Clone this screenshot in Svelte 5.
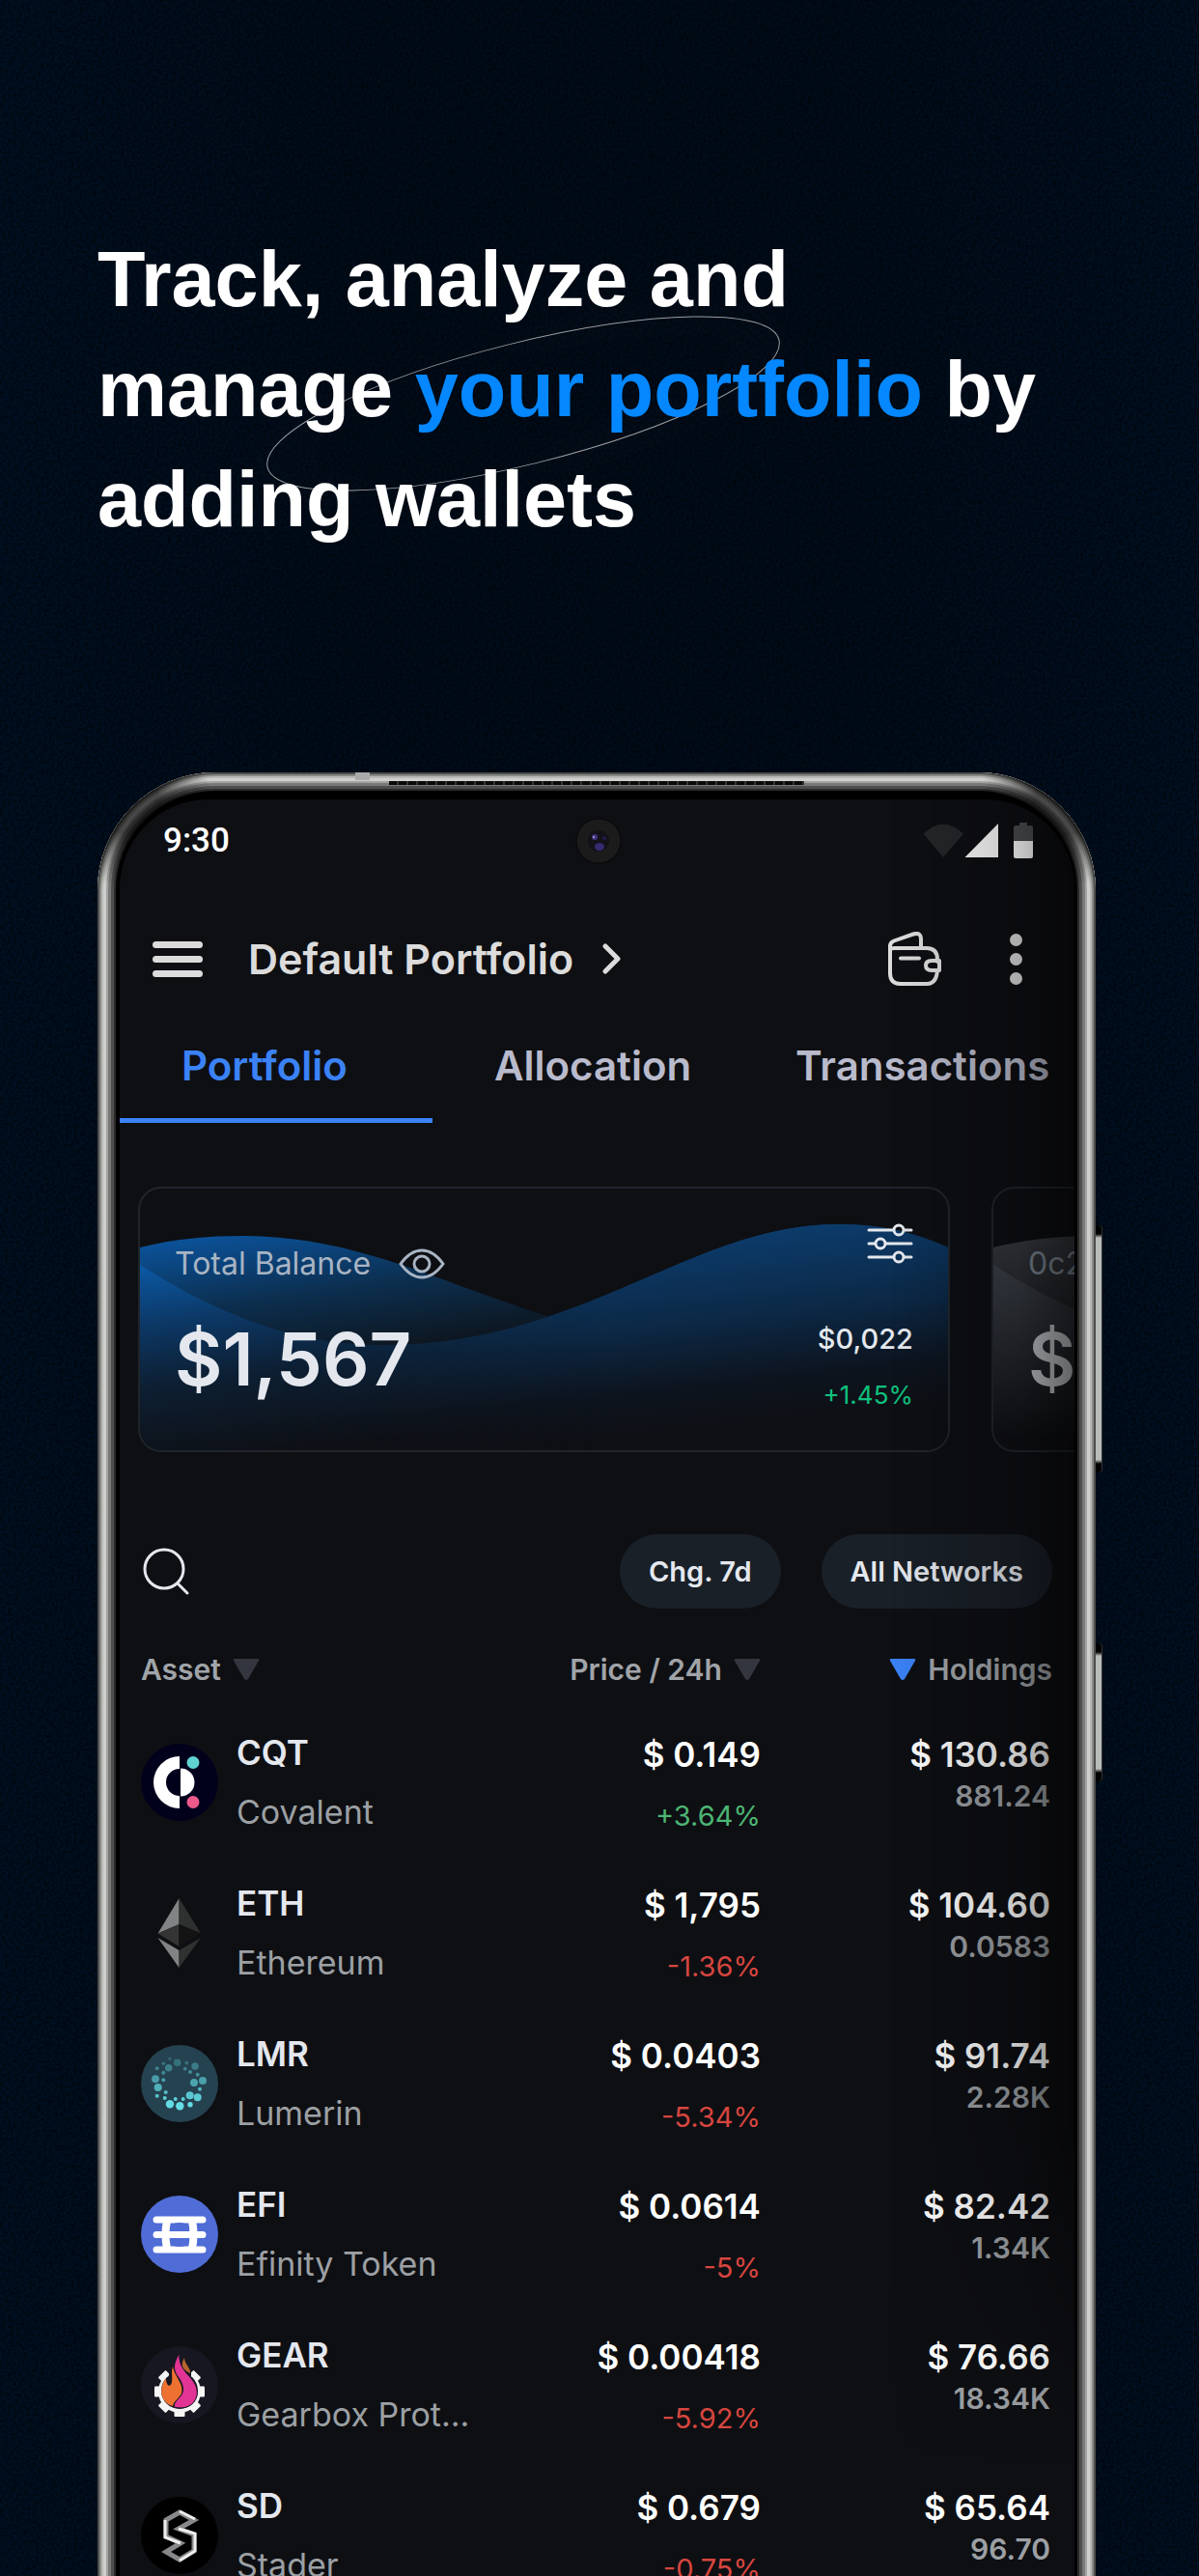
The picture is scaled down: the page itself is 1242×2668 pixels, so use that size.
<script lang="ts">
	type Asset = {
		symbol: string;
		name: string;
		price: string;
		change: string;
		value: string;
		amount: string;
	};

	const assets: Asset[] = [
		{ symbol: 'CQT', name: 'Covalent', price: '$ 0.149', change: '+3.64%', value: '$ 130.86', amount: '881.24' },
		{ symbol: 'ETH', name: 'Ethereum', price: '$ 1,795', change: '-1.36%', value: '$ 104.60', amount: '0.0583' },
		{ symbol: 'LMR', name: 'Lumerin', price: '$ 0.0403', change: '-5.34%', value: '$ 91.74', amount: '2.28K' },
		{ symbol: 'EFI', name: 'Efinity Token', price: '$ 0.0614', change: '-5%', value: '$ 82.42', amount: '1.34K' },
		{ symbol: 'GEAR', name: 'Gearbox Prot...', price: '$ 0.00418', change: '-5.92%', value: '$ 76.66', amount: '18.34K' },
		{ symbol: 'SD', name: 'Stader', price: '$ 0.679', change: '-0.75%', value: '$ 65.64', amount: '96.70' }
	];

	const tabs = ['Portfolio', 'Allocation', 'Transactions'];
	let activeTab = $state('Portfolio');

	// x, y, radius
	const lumerinDots = [
		[37.7, 18.3, 3.8], [28.7, 23.7, 3.8], [56, 22, 3.8], [64, 37, 4], [55, 39, 4],
		[50.7, 52.3, 4], [58.7, 54.3, 4], [40.3, 63.3, 4.2], [30, 61.3, 4.2], [17.7, 44, 4],
		[15, 35.3, 4], [30, 14.3, 1.7], [23.3, 19.3, 1.8], [16.7, 24.3, 2], [23.3, 28.7, 2],
		[23.3, 36.3, 2], [47.3, 18.7, 1.9], [45.7, 24.7, 1.9], [51, 28, 2], [58.7, 30.7, 2],
		[61, 45.7, 2], [25.7, 49, 2], [24.7, 55, 2], [16.7, 52.7, 2], [35.7, 56, 2],
		[43.7, 56, 2], [51, 61.7, 2.7]
	];

	const gearTeeth = [0, 45, 90, 135, 180, 225, 270, 315];
</script>

<main>
	<svg class="grain" aria-hidden="true">
		<filter id="noise">
			<feTurbulence type="fractalNoise" baseFrequency="0.35" numOctaves="2" />
			<feColorMatrix values="0 0 0 0 0  0 0 0 0 0  0 0 0 0 0  0 0 0 1.4 -0.5" />
		</filter>
		<rect width="100%" height="100%" filter="url(#noise)" />
	</svg>

	<h1>
		<svg class="orbit" viewBox="0 0 560 200" aria-hidden="true">
			<ellipse cx="280" cy="100" rx="273" ry="63" transform="rotate(-14 280 100)" />
		</svg>
		<span>Track, analyze and manage <em>your portfolio</em> by adding wallets</span>
	</h1>

	<div class="phone">
		<i class="antenna"></i>
		<i class="speaker"></i>
		<i class="side-button volume"></i>
		<i class="side-button power"></i>
		<div class="screen">
			<div class="status">
				<span>9:30</span>
				<svg class="camera" viewBox="0 0 48 48" aria-hidden="true">
					<circle cx="24" cy="24" r="23" fill="#1b1b1c" stroke="#08080a" stroke-width="1" />
					<circle cx="24" cy="24" r="11" fill="#131218" />
					<circle cx="20" cy="20" r="3" fill="#443480" />
					<circle cx="19" cy="20" r="1" fill="#a99be0" />
					<ellipse cx="25" cy="30" rx="5" ry="4" fill="#352a74" />
					<circle cx="30" cy="21" r="2" fill="#231c4c" />
				</svg>
				<svg class="signals" viewBox="0 0 114 40" aria-hidden="true">
					<path d="M0.500 12.500Q21 -7 42 12.500L21 37Z" fill="#26272a" />
					<path d="M43.500 37H78V2Z" fill="#fff" />
					<path d="M100 1h8v3h4q2 0 2 2v15H94V6q0-2 2-2h4z" fill="#4c4d4f" />
					<path d="M94 20h20v16q0 2-2 2H96q-2 0-2-2z" fill="#fff" />
				</svg>
			</div>

			<header>
				<button class="menu" aria-label="Menu"><i></i><i></i><i></i></button>
				<button class="picker">
					Default Portfolio
					<svg width="20" height="34" viewBox="0 0 20 34" aria-hidden="true">
						<path d="M3 4L16 17L3 30" />
					</svg>
				</button>
				<button class="wallets" aria-label="Wallets">
					<svg width="56" height="56" viewBox="0 0 56 56" aria-hidden="true">
						<path d="M3 19Q3 17 8 17H41Q52 17 52 29V31M52 40Q51 54 41 54H14Q3 54 3 43V15Q3 11 7 9.500L27 2.500Q35 0 35 8V16" />
						<path d="M14 27.500H33" />
						<path d="M46 30H54V40H46Q40 40 40 35Q40 30 46 30Z" />
					</svg>
				</button>
				<button class="more" aria-label="More"><i></i><i></i><i></i></button>
			</header>

			<nav>
				{#each tabs as tab}
					<button class:active={tab === activeTab} onclick={() => (activeTab = tab)}>{tab}</button>
				{/each}
			</nav>

			<section class="cards">
				<article class="card">
					<svg class="waves" viewBox="0 0 838 271" preserveAspectRatio="none" aria-hidden="true">
						<defs>
							<linearGradient id="back" gradientUnits="userSpaceOnUse" x1="150" y1="40" x2="170" y2="180">
								<stop offset="0" stop-color="#0b5096" />
								<stop offset="0.5" stop-color="#0c2f50" />
								<stop offset="1" stop-color="#0d161f" />
							</linearGradient>
							<linearGradient id="backFade" x1="0" x2="1" y1="0" y2="0">
								<stop offset="0.5" stop-color="#fff" />
								<stop offset="0.8" stop-color="#000" />
							</linearGradient>
							<mask id="backMask"><rect width="838" height="271" fill="url(#backFade)" /></mask>
							<linearGradient id="front" gradientUnits="userSpaceOnUse" x1="0" y1="60" x2="30" y2="290">
								<stop offset="0" stop-color="#0b63b8" />
								<stop offset="0.35" stop-color="#0c3866" />
								<stop offset="0.62" stop-color="#0d1f33" />
								<stop offset="1" stop-color="#0e0f14" />
							</linearGradient>
							<linearGradient id="frontRight" gradientUnits="userSpaceOnUse" x1="600" y1="20" x2="625" y2="250">
								<stop offset="0" stop-color="#0c4177" />
								<stop offset="0.5" stop-color="#0c2845" />
								<stop offset="0.78" stop-color="#0d141f" />
								<stop offset="1" stop-color="#0e0f13" />
							</linearGradient>
							<linearGradient id="shift" gradientUnits="userSpaceOnUse" x1="150" y1="0" x2="480" y2="0">
								<stop offset="0" stop-color="#000" />
								<stop offset="1" stop-color="#fff" />
							</linearGradient>
							<mask id="shiftMask"><rect width="838" height="271" fill="url(#shift)" /></mask>
						</defs>
						<path d="M0 61C36 52 70 49 106 49C240 49 330 110 480 149C540 161 600 165 660 163V271H0Z" fill="url(#back)" mask="url(#backMask)" />
						<path d="M0 79C80 130 160 162 252 162C460 162 570 37 725 37C770 37 805 46 838 61V271H0Z" fill="url(#front)" />
						<path d="M0 79C80 130 160 162 252 162C460 162 570 37 725 37C770 37 805 46 838 61V271H0Z" fill="url(#frontRight)" mask="url(#shiftMask)" />
					</svg>
					<div class="balance">
						<p class="label">
							Total Balance
							<button aria-label="Hide balance">
								<svg width="48" height="32" viewBox="0 0 48 32" aria-hidden="true">
									<path d="M2 16Q12 2 24 2T46 16Q36 30 24 30T2 16Z" />
									<circle cx="24" cy="16" r="8" />
								</svg>
							</button>
						</p>
						<strong>$1,567</strong>
					</div>
					<div class="side">
						<button aria-label="Settings">
							<svg width="48" height="42" viewBox="0 0 48 42" aria-hidden="true">
								<path d="M2 7H27M39 7H46M2 21H8M20 21H46M2 35H27M39 35H46" />
								<circle cx="33" cy="7" r="5" />
								<circle cx="14" cy="21" r="5" />
								<circle cx="33" cy="35" r="5" />
							</svg>
						</button>
						<span>$0,022</span>
						<span class="gain">+1.45%</span>
					</div>
				</article>
				<article class="card muted">
					<svg class="waves" viewBox="0 0 838 271" preserveAspectRatio="none" aria-hidden="true">
						<defs>
							<linearGradient id="grey" gradientUnits="userSpaceOnUse" x1="0" x2="10" y1="70" y2="260">
								<stop offset="0" stop-color="#3e434a" />
								<stop offset="1" stop-color="#0e0f13" />
							</linearGradient>
							<linearGradient id="greyBack" gradientUnits="userSpaceOnUse" x1="0" x2="0" y1="40" y2="160">
								<stop offset="0" stop-color="#3a3d43" />
								<stop offset="1" stop-color="#17191d" />
							</linearGradient>
						</defs>
						<path d="M0 61C36 52 70 49 106 49C240 49 330 120 480 149V271H0Z" fill="url(#greyBack)" />
						<path d="M0 79C80 130 160 162 252 162C460 162 570 37 725 37C770 37 805 46 838 61V271H0Z" fill="url(#grey)" />
					</svg>
					<div class="balance">
						<p class="label">0c27</p>
						<strong>$</strong>
					</div>
				</article>
			</section>

			<section class="tools">
				<button class="search" aria-label="Search">
					<svg width="52" height="52" viewBox="0 0 52 52" aria-hidden="true">
						<circle cx="25" cy="23" r="20" />
						<path d="M39 38L49 48" />
					</svg>
				</button>
				<button class="pill">Chg. 7d</button>
				<button class="pill">All Networks</button>
			</section>

			{#snippet arrow(on = false)}
				<svg class="arrow" class:on width="28" height="24" viewBox="0 0 28 24" aria-hidden="true">
					<path d="M2 1H26Q28 1 27 3L16 22Q14 24 12 22L1 3Q0 1 2 1Z" />
				</svg>
			{/snippet}

			<table>
				<thead>
					<tr>
						<th class="asset"><button>Asset {@render arrow()}</button></th>
						<th class="price"><button>Price / 24h {@render arrow()}</button></th>
						<th><button>{@render arrow(true)} Holdings</button></th>
					</tr>
				</thead>
				<tbody>
					{#each assets as asset}
						<tr>
							<td>
								<div class="coin">
									<svg width="80" height="80" viewBox="0 0 80 80" aria-hidden="true">
										{#if asset.symbol === 'CQT'}
											<circle cx="40" cy="40" r="40" fill="#02011c" />
											<path d="M40 13A27 27 0 0 0 40 67V54A14 14 0 0 1 40 26Z" fill="#fff" />
											<path d="M41 25.500A14.500 14.500 0 0 1 41 54.500Z" fill="#fff" />
											<circle cx="54" cy="19.500" r="6.500" fill="#62d3d3" />
											<circle cx="54" cy="60.500" r="6.500" fill="#ec5a8a" />
										{:else if asset.symbol === 'ETH'}
											<path d="M39.500 4V31L17.500 40.500Z" fill="#828384" />
											<path d="M39.500 4V31L62 40.500Z" fill="#2f3030" />
											<path d="M39.500 31V54L17.500 40.500Z" fill="#343434" />
											<path d="M39.500 31V54L62 40.500Z" fill="#131313" />
											<path d="M17.500 45L39.500 58V76Z" fill="#828384" />
											<path d="M62 45L39.500 58V76Z" fill="#2f3030" />
										{:else if asset.symbol === 'LMR'}
											<circle cx="40" cy="40" r="40" fill="#254250" />
											{#each lumerinDots as [x, y, r]}
												<circle cx={x} cy={y} {r} fill="#63dde6" opacity={0.2 + (y - 12) / 62} />
											{/each}
										{:else if asset.symbol === 'EFI'}
											<circle cx="40" cy="40" r="40" fill="#506cd6" />
											<path d="M16 25H64M16 40.500H64M16 56H64" stroke="#fff" stroke-width="7" stroke-linecap="round" />
											<path d="M27 26Q24 40 27 55M53 26Q56 40 53 55" fill="none" stroke="#fff" stroke-width="8" />
											<path d="M30 37Q30 28 40 28T50 37ZM30 44Q30 53 40 53T50 44Z" fill="#506cd6" />
										{:else if asset.symbol === 'GEAR'}
											<circle cx="40" cy="40" r="40" fill="#171722" />
											{#each gearTeeth as angle}
												<rect x="34.500" y="21" width="11" height="14" rx="1" fill="#f5f5f5" transform="rotate({angle} 40 47)" />
											{/each}
											<circle cx="40" cy="47" r="22" fill="#f5f5f5" />
											<circle cx="40" cy="46" r="19" fill="#171722" />
											<path d="M29 34V14H52V33Z" fill="#171722" />
											<path d="M33 62C24 60 19 50 22 41C23 37 25 35 26 33C26 42 31 43 32 37C33 32 31 27 33 21C35 32 45 39 42 49C40 54 34 57 33 62Z" fill="#ed7130" />
											<path d="M40 7C30 23 36 28 40 34C46 45 44 49 37 56Q34 59 34 63C50 67 60 57 58 45C56 31 38 27 40 7Z" fill="#e13494" stroke="#171722" />
											<path d="M45 12C40 20 44 25 51 28C52 22 45 19 45 12Z" fill="#b8652d" />
										{:else}
											<circle cx="40" cy="40" r="40" fill="#000" />
											<path d="M55 24L40 16L26 24V41L41 48L26 57L40 65L55 56V39L39 33Z" fill="none" stroke="#88888b" stroke-width="5" />
											<path d="M56 23L40 15M25 24V42L41 48M40 66L56 56V38L39 33" fill="none" stroke="#eee" stroke-width="3" />
										{/if}
									</svg>
									<div>
										<b>{asset.symbol}</b>
										<span>{asset.name}</span>
									</div>
								</div>
							</td>
							<td class="price">
								<b>{asset.price}</b>
								<span class:up={asset.change.startsWith('+')}>{asset.change}</span>
							</td>
							<td class="holdings">
								<b>{asset.value}</b>
								<span>{asset.amount}</span>
							</td>
						</tr>
					{/each}
				</tbody>
			</table>
			<div class="shade"></div>
		</div>
	</div>
</main>

<style>
	:global(body) {
		background: #010a16;
	}

	main {
		position: relative;
		box-sizing: border-box;
		height: 100vh;
		overflow: hidden;
		padding: 232px 107px 0 101px;
		background: linear-gradient(90deg, #001022, #000c1a 30%, #000c1a 70%, #001022);
		font-family: Inter, 'Liberation Sans', sans-serif;
		color: #e4e8ee;
	}

	.grain {
		position: absolute;
		inset: 0;
		width: 100%;
		height: 100%;
	}

	h1 {
		position: relative;
		margin: 0 0 226px;
		padding-right: 48px;
		font: bold 81px/114px 'Liberation Sans', Arial, sans-serif;
		color: #fff;
	}

	h1 span {
		position: relative;
	}

	h1 em {
		font-style: normal;
		color: #0587ff;
	}

	.orbit {
		position: absolute;
		left: 161px;
		top: 86px;
		width: 560px;
		overflow: visible;
		fill: none;
		stroke: #9a9da2;
		filter: drop-shadow(0 0 24px rgba(255, 255, 255, 0.4));
	}

	button {
		border: 0;
		padding: 0;
		background: none;
		font: inherit;
		color: inherit;
	}

	svg {
		display: block;
		flex: none;
	}

	.phone {
		position: relative;
		padding: 28px 22px 0 23px;
		border-radius: 122px 122px 0 0;
		background: #000;
		box-shadow:
			inset 0 0 0 2px #4c4d4c,
			inset 0 0 0 4px #888a86,
			inset 0 0 0 6px #b9bab7,
			inset 0 0 0 9px #cfd0cd,
			inset 0 0 0 11px #a3a4a2,
			inset 0 0 0 14px #787978,
			inset 0 0 0 17px #4d4e4d,
			inset 0 0 0 19px #2b2b2b;
	}

	.phone::before {
		content: '';
		position: absolute;
		inset: 0 0 auto;
		height: 160px;
		border-radius: 122px 122px 0 0;
		background:
			radial-gradient(circle at 34px 34px, rgba(0, 0, 0, 0.65) 30px, transparent 86px),
			radial-gradient(circle at calc(100% - 34px) 34px, rgba(0, 0, 0, 0.65) 30px, transparent 86px);
	}

	.antenna {
		position: absolute;
		left: 267px;
		top: 0;
		width: 15px;
		height: 8px;
		background: #a9abaa;
	}

	.speaker {
		position: absolute;
		left: 302px;
		right: 302px;
		top: 9px;
		height: 4px;
		background: repeating-linear-gradient(90deg, #0a0a0a 0 8px, #333 8px 10px);
	}

	.side-button {
		position: absolute;
		right: -7px;
		width: 7px;
		border-radius: 0 4px 4px 0;
		background: linear-gradient(#000 9px, #b9bdb9 13px, #b9bdb9 calc(100% - 13px), #000 calc(100% - 9px));
		box-shadow: inset -1px 0 #333;
	}

	.volume {
		top: 469px;
		height: 256px;
	}

	.power {
		top: 902px;
		height: 143px;
	}

	.screen {
		position: relative;
		overflow: hidden;
		border-radius: 92px 92px 0 0;
		background: #0e0f13;
	}

	.status {
		display: grid;
		grid-template-columns: 1fr auto 1fr;
		align-items: center;
		height: 86px;
		padding: 0 43px 0 45px;
		font: 500 35px/40px Roboto, sans-serif;
		color: #fff;
	}

	.camera {
		width: 48px;
	}

	.signals {
		width: 114px;
		justify-self: end;
	}

	header {
		display: flex;
		align-items: center;
		height: 158px;
		padding: 0 54px 0 34px;
		font-size: 43px;
		font-weight: 600;
		color: #dcdcdc;
	}

	.menu {
		display: grid;
		gap: 8px;
		width: 52px;
		margin-right: 47px;
	}

	.menu i {
		height: 7px;
		border-radius: 4px;
		background: #dcdcdc;
	}

	.picker {
		display: flex;
		align-items: center;
		gap: 30px;
		margin-right: auto;
		white-space: nowrap;
	}

	header svg {
		fill: none;
		stroke: #dcdcdc;
		stroke-width: 4;
		stroke-linecap: round;
		stroke-linejoin: round;
	}

	.picker svg {
		stroke-width: 5;
	}

	.wallets {
		margin-right: 71px;
	}

	.more {
		display: grid;
		gap: 7px;
	}

	.more i {
		width: 13px;
		height: 13px;
		border-radius: 50%;
		background: #dcdcdc;
	}

	nav {
		display: grid;
		grid-template-columns: 324fr 312fr 353fr;
	}

	nav button {
		padding: 0 0 22px 64px;
		border-bottom: 5px solid transparent;
		font-size: 42px;
		font-weight: 600;
		line-height: 64px;
		text-align: left;
		white-space: nowrap;
		color: #b9bbcc;
	}

	nav .active {
		border-color: #3b82f6;
		color: #3b82f6;
	}

	.cards {
		display: flex;
		gap: 43px;
		margin: 66px 0 85px 19px;
	}

	.card {
		position: relative;
		box-sizing: border-box;
		flex: 0 0 calc(100% - 129px);
		display: flex;
		justify-content: space-between;
		height: 275px;
		padding: 0 36px;
		border: 2px solid #20252c;
		border-radius: 24px;
		overflow: hidden;
	}

	.waves {
		position: absolute;
		inset: 0;
		width: 100%;
		height: 100%;
	}

	.balance,
	.side {
		position: relative;
		padding-top: 58px;
	}

	.label {
		display: flex;
		align-items: center;
		gap: 29px;
		margin: 0 0 33px;
		font-size: 32px;
		line-height: 40px;
		color: #a8b4c4;
	}

	.label svg {
		fill: none;
		stroke: #a8b4c4;
		stroke-width: 3;
	}

	.balance strong {
		display: block;
		font-size: 76px;
		font-weight: 600;
		line-height: 90px;
	}

	.muted .label {
		color: #7c8692;
	}

	.muted strong {
		color: #c4c6ca;
	}

	.side {
		display: flex;
		flex-direction: column;
		align-items: flex-end;
		padding-top: 36px;
		font-size: 29px;
		font-weight: 500;
		line-height: 58px;
	}

	.side button {
		margin-bottom: 49px;
	}

	.side svg {
		fill: none;
		stroke: #e4e8ee;
		stroke-width: 3;
		stroke-linecap: round;
	}

	.side .gain {
		font-size: 26px;
		font-weight: 400;
		color: #0fc27e;
	}

	.tools {
		display: flex;
		align-items: center;
		gap: 42px;
		padding: 0 23px 0 21px;
	}

	.search {
		margin-right: auto;
	}

	.search svg {
		fill: none;
		stroke: #e4e8ee;
		stroke-width: 3;
		stroke-linecap: round;
	}

	.pill {
		height: 77px;
		padding: 0 30px;
		border-radius: 39px;
		background: #1a2028;
		font-size: 29px;
		font-weight: 600;
	}

	table {
		width: calc(100% - 45px);
		margin: 24px 23px 0 22px;
		border-collapse: collapse;
		table-layout: fixed;
		text-align: right;
	}

	th {
		height: 78px;
		padding: 0;
		font-size: 30px;
		font-weight: 600;
		line-height: 36px;
		white-space: nowrap;
		color: #a0a4a8;
	}

	th.asset {
		width: 30%;
	}

	th.price {
		width: 38%;
		padding-right: 6px;
	}

	th button {
		display: flex;
		align-items: center;
		gap: 12px;
		margin-left: auto;
	}

	th.asset button {
		margin: 0;
	}

	.arrow {
		fill: #34363f;
	}

	.arrow.on {
		fill: #3b82f6;
	}

	td {
		box-sizing: border-box;
		height: 156px;
		padding: 0 3px 0 0;
		vertical-align: top;
		white-space: nowrap;
	}

	td b,
	td span {
		display: block;
	}

	td b {
		font-size: 35px;
		font-weight: 600;
		color: #fff;
	}

	td span {
		font-size: 29px;
	}

	.coin {
		display: flex;
		align-items: center;
		gap: 19px;
		height: 156px;
		line-height: 61px;
		text-align: left;
	}

	.coin b {
		color: #e4e8ee;
	}

	.coin span {
		font-size: 34px;
		color: #9ca0a4;
	}

	td.price {
		padding: 18px 6px 0 0;
		line-height: 63px;
	}

	td.price span {
		color: #d6463f;
	}

	td.price span.up {
		color: #4cb573;
	}

	td.holdings {
		padding: 28px 2px 0 0;
		line-height: 43px;
	}

	.holdings span {
		font-size: 30px;
		font-weight: 600;
		color: #9ca0a4;
	}

	.shade {
		position: absolute;
		top: 0;
		right: 0;
		width: 190px;
		height: 1720px;
		background: linear-gradient(90deg, transparent, rgba(0, 0, 0, 0.22) 70%, rgba(0, 0, 0, 0.5));
		-webkit-mask-image: linear-gradient(#000 80%, transparent);
		mask-image: linear-gradient(#000 80%, transparent);
		pointer-events: none;
	}
</style>
